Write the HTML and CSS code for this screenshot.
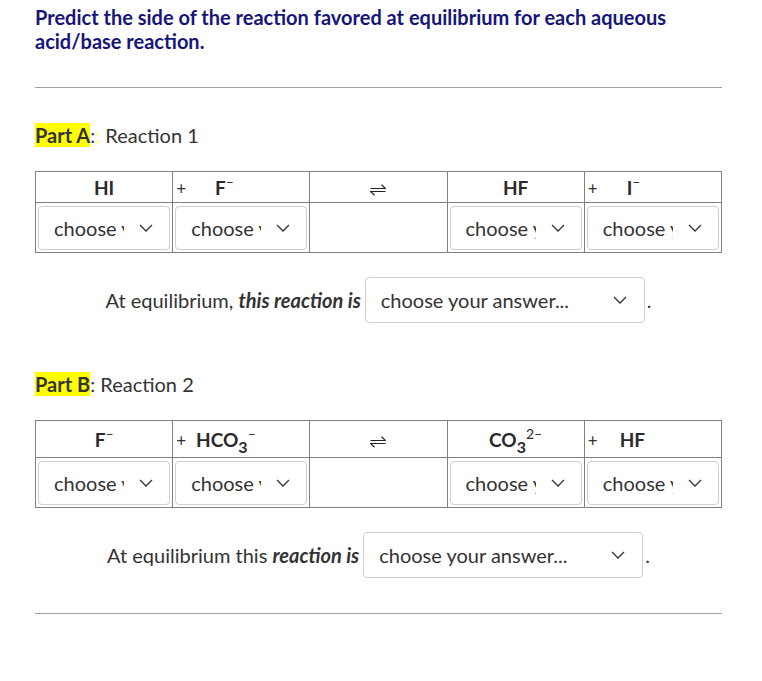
FILE: index.html
```html
<!DOCTYPE html>
<html>
<head>
<meta charset="utf-8">
<link rel="stylesheet" href="styles.css">
</head>
<body>
<div class="page">
  <h1 class="title">Predict the side of the reaction favored at equilibrium for each aqueous acid/base reaction.</h1>
  <hr class="rule rule-top">

  <div class="part part-a"><mark class="hl">Part A</mark>:<span class="ghost">:</span> Reaction 1</div>
  <table class="rx">
    <tr class="hd">
      <td class="c">HI</td>
      <td class="l"><span class="plus">+</span><span class="sp1">F<sup>–</sup></span></td>
      <td class="c"><svg class="eq" width="16" height="12" viewBox="0 0 16 12"><path d="M0.5 4.5H15.5L11.5 0.8M15.5 7.5H0.5L4.5 11.2" fill="none" stroke="#222" stroke-width="1.2"/></svg></td>
      <td class="c">HF</td>
      <td class="l"><span class="plus">+</span><span class="sp1">I<sup>–</sup></span></td>
    </tr>
    <tr class="sel">
      <td><div class="dd"><span class="dt">choose your answer...</span><svg class="chev" width="14" height="8" viewBox="0 0 14 8"><path d="M1 1L7 7L13 1" fill="none" stroke="#333" stroke-width="1.3"/></svg></div></td>
      <td><div class="dd"><span class="dt">choose your answer...</span><svg class="chev" width="14" height="8" viewBox="0 0 14 8"><path d="M1 1L7 7L13 1" fill="none" stroke="#333" stroke-width="1.3"/></svg></div></td>
      <td></td>
      <td><div class="dd"><span class="dt">choose your answer...</span><svg class="chev" width="14" height="8" viewBox="0 0 14 8"><path d="M1 1L7 7L13 1" fill="none" stroke="#333" stroke-width="1.3"/></svg></div></td>
      <td><div class="dd"><span class="dt">choose your answer...</span><svg class="chev" width="14" height="8" viewBox="0 0 14 8"><path d="M1 1L7 7L13 1" fill="none" stroke="#333" stroke-width="1.3"/></svg></div></td>
    </tr>
  </table>

  <div class="sentence s-a">
    <span>At equilibrium, <b><i>this reaction is</i></b></span>
    <div class="dd big"><span class="dt">choose your answer...</span><svg class="chev" width="14" height="8" viewBox="0 0 14 8"><path d="M1 1L7 7L13 1" fill="none" stroke="#333" stroke-width="1.3"/></svg></div>
    <span class="dot">.</span>
  </div>

  <div class="part part-b"><mark class="hl">Part B</mark>: Reaction 2</div>
  <table class="rx rx-b">
    <tr class="hd">
      <td class="c">F<sup>–</sup></td>
      <td class="l"><span class="plus">+</span><span class="sp2">HCO<sub>3</sub><sup>–</sup></span></td>
      <td class="c"><svg class="eq" width="16" height="12" viewBox="0 0 16 12"><path d="M0.5 4.5H15.5L11.5 0.8M15.5 7.5H0.5L4.5 11.2" fill="none" stroke="#222" stroke-width="1.2"/></svg></td>
      <td class="c">CO<sub>3</sub><sup>2–</sup></td>
      <td class="l"><span class="plus">+</span><span class="sp3">HF</span></td>
    </tr>
    <tr class="sel">
      <td><div class="dd"><span class="dt">choose your answer...</span><svg class="chev" width="14" height="8" viewBox="0 0 14 8"><path d="M1 1L7 7L13 1" fill="none" stroke="#333" stroke-width="1.3"/></svg></div></td>
      <td><div class="dd"><span class="dt">choose your answer...</span><svg class="chev" width="14" height="8" viewBox="0 0 14 8"><path d="M1 1L7 7L13 1" fill="none" stroke="#333" stroke-width="1.3"/></svg></div></td>
      <td></td>
      <td><div class="dd"><span class="dt">choose your answer...</span><svg class="chev" width="14" height="8" viewBox="0 0 14 8"><path d="M1 1L7 7L13 1" fill="none" stroke="#333" stroke-width="1.3"/></svg></div></td>
      <td><div class="dd"><span class="dt">choose your answer...</span><svg class="chev" width="14" height="8" viewBox="0 0 14 8"><path d="M1 1L7 7L13 1" fill="none" stroke="#333" stroke-width="1.3"/></svg></div></td>
    </tr>
  </table>

  <div class="sentence s-b">
    <span>At equilibrium this <b><i>reaction is</i></b></span>
    <div class="dd big"><span class="dt">choose your answer...</span><svg class="chev" width="14" height="8" viewBox="0 0 14 8"><path d="M1 1L7 7L13 1" fill="none" stroke="#333" stroke-width="1.3"/></svg></div>
    <span class="dot">.</span>
  </div>

  <hr class="rule rule-bottom">
</div>
</body>
</html>
```

FILE: styles.css
```css
html, body {
  margin: 0;
  padding: 0;
  background: #fff;
}
body {
  font-family: Lato, "Open Sans", Arial, sans-serif;
  color: #333;
  font-size: 20px;
}
.page {
  width: 687px;
  margin-left: 35px;
  padding-top: 5px;
}
.title {
  margin: 0;
  font-size: 20px;
  line-height: 24px;
  font-weight: 700;
  color: #161679;
}
.rule {
  border: 0;
  border-top: 1px solid #a0a0a0;
  margin: 0;
  height: 0;
}
.rule-top {
  margin-top: 34px;
}
.part {
  line-height: 22px;
  font-size: 20px;
  color: #333;
}
.part-a {
  margin-top: 36px;
}
.part-b {
  margin-top: 50px;
}
.hl {
  background: #ffff00;
  color: #333;
  font-weight: 700;
}
.ghost {
  color: #ffff60;
}
.rx {
  width: 687px;
  border-collapse: collapse;
  table-layout: fixed;
  margin-top: 25px;
}
.rx td {
  border: 1.5px solid #808080;
  padding: 0;
  vertical-align: middle;
}
.rx .hd td {
  height: 30px;
  font-weight: 700;
  font-size: 19px;
  color: #2a2a2a;
}
.rx-b .hd td {
  height: 36px;
}
.rx .hd td.c {
  text-align: center;
}
.rx .hd td.l {
  text-align: left;
  padding-left: 3px;
}
.plus {
  font-weight: 400;
  font-size: 17px;
  color: #333;
}
.sp1 { margin-left: 29px; }
.sp2 { margin-left: 10px; }
.sp3 { margin-left: 22px; }
sup {
  font-size: 14px;
  font-weight: 400;
  vertical-align: 8px;
  line-height: 0;
}
sub {
  font-size: 16px;
  vertical-align: -6px;
  line-height: 0;
}
.eq {
  display: inline-block;
  vertical-align: middle;
}
.rx .sel td {
  height: 49px;
  padding: 0 2px;
}
.dd {
  display: flex;
  align-items: center;
  height: 44px;
  box-sizing: border-box;
  border: 1px solid #cfcfcf;
  border-radius: 4px;
  background: #fff;
  padding-left: 15px;
  padding-right: 16px;
  font-size: 20px;
  color: #333;
}
.dt {
  flex: 1;
  overflow: hidden;
  white-space: nowrap;
  max-width: 70px;
  margin-right: 14px;
}
.chev {
  flex: none;
  margin-left: auto;
}
.sentence {
  display: flex;
  align-items: center;
  justify-content: center;
  font-size: 20px;
  color: #333;
}
.sentence b {
  font-weight: 700;
}
.s-a {
  margin-top: 24px;
}
.s-b {
  margin-top: 24px;
}
.dd.big {
  width: 280px;
  height: 46px;
  margin-left: 4px;
  padding-right: 17px;
}
.dd.big .dt {
  max-width: none;
  margin-right: 0;
}
.dot {
  margin-left: 2px;
}
.rule-bottom {
  margin-top: 35px;
}
```
